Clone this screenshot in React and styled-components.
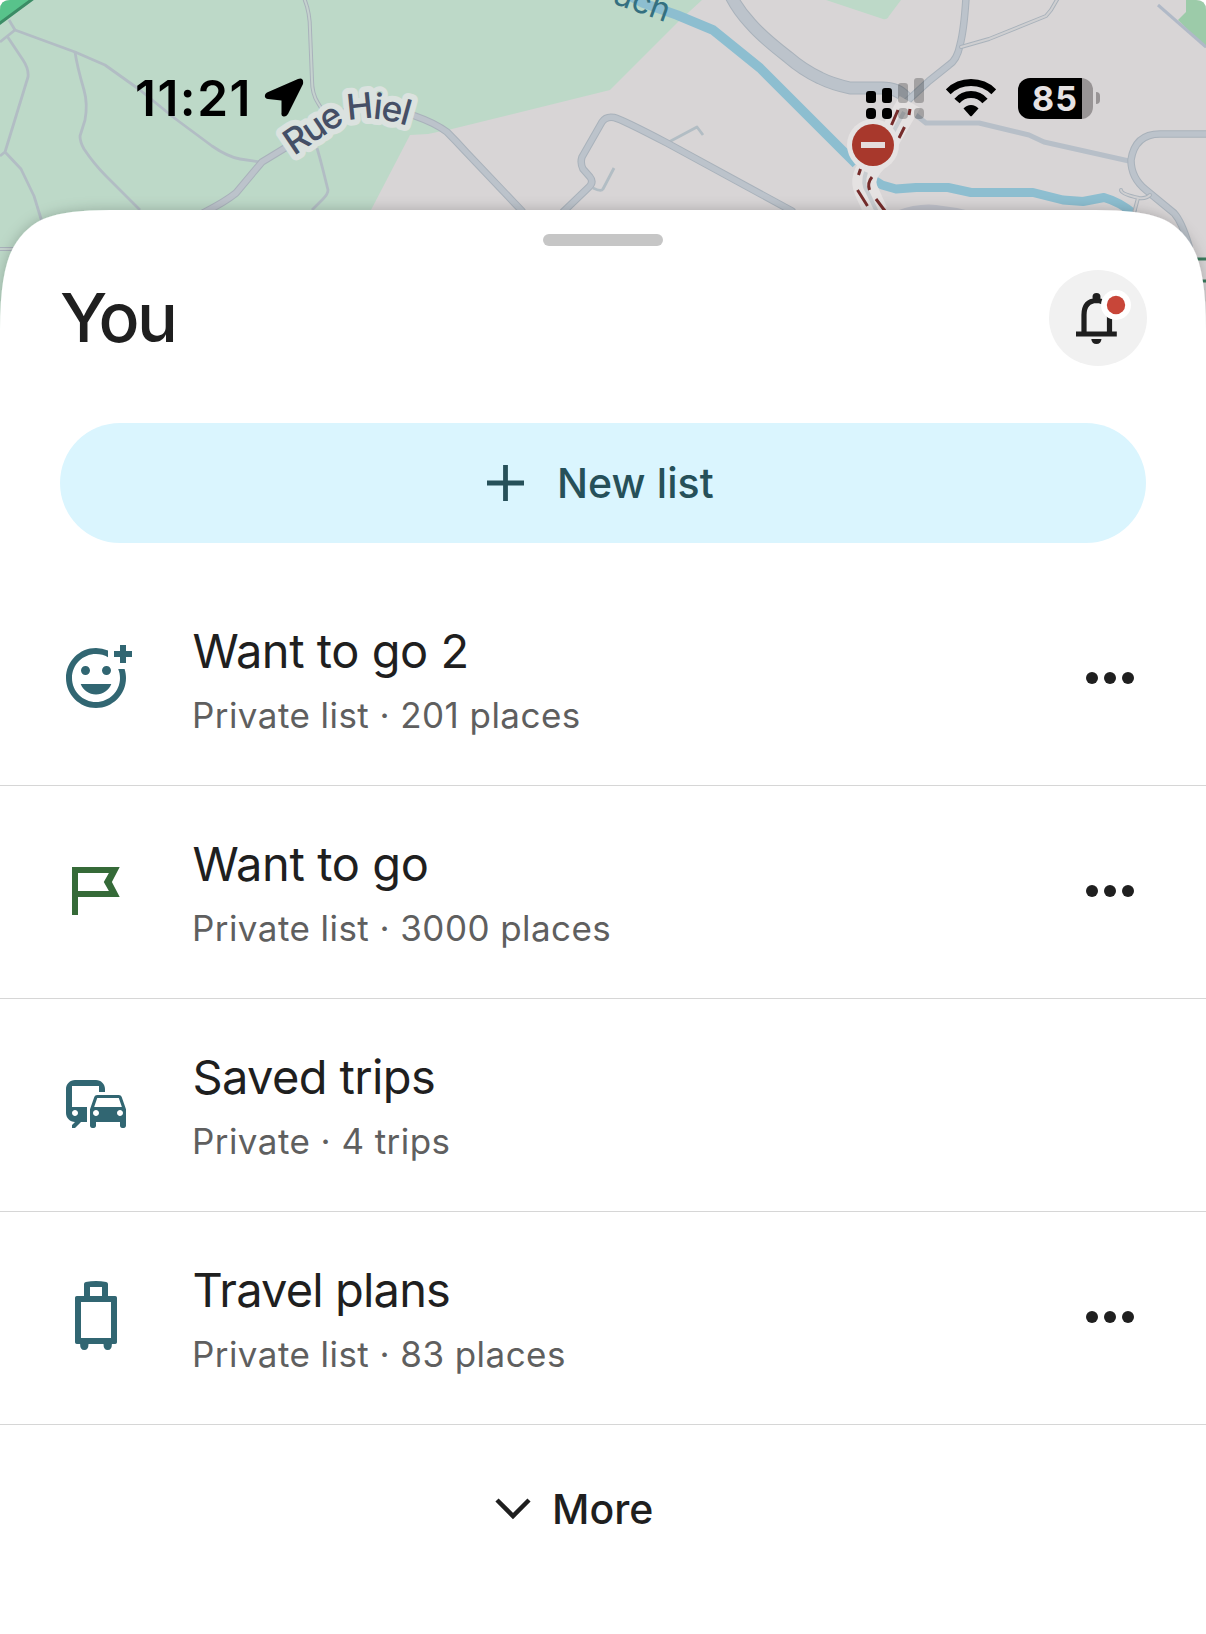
import React from "react";
import styled, { createGlobalStyle, css } from "styled-components";

const Global = createGlobalStyle`
  * { box-sizing: border-box; }
  body { margin: 0; background: #fff; font-family: Inter, "Liberation Sans", sans-serif; color: #1f1f1f; }
  button { font: inherit; color: inherit; border: 0; padding: 0; background: none; }
`;

const Screen = styled.main`
  width: 1206px;
  height: 1634px;
  overflow: hidden;
  position: relative;
  background: #fff;
`;

const MapArea = styled.svg`
  display: block;
  width: 1206px;
  height: 350px;
`;

const MapLabel = styled.text`
  font-family: Inter, sans-serif;
  font-size: ${(p) => p.$size}px;
  font-weight: ${(p) => p.$weight || 400};
  letter-spacing: ${(p) => p.$track || 0}px;
  word-spacing: -4px;
  fill: ${(p) => p.$fill};
  stroke: ${(p) => p.$halo || "none"};
  stroke-width: ${(p) => (p.$halo ? 12 : 0)}px;
  stroke-linejoin: round;
`;

const StatusBar = styled.header`
  position: absolute;
  top: 70px;
  left: 0;
  right: 0;
  height: 56px;
  padding: 0 106px 0 135px;
  display: flex;
  align-items: center;
  justify-content: space-between;
`;

const StatusGroup = styled.div`
  display: flex;
  align-items: center;
  gap: ${(p) => p.$gap}px;
`;

const Clock = styled.span`
  font-size: 49.5px;
  line-height: 56px;
  font-weight: 600;
  letter-spacing: 1.5px;
  color: #000;
`;

const Battery = styled.div`
  display: flex;
  align-items: center;
  gap: 3px;
`;

const BatteryBody = styled.div`
  width: 75px;
  height: 41px;
  padding-right: 1px;
  border-radius: 12px;
  background: linear-gradient(to right, #000 64px, #989495 64px);
  color: #e6e2e3;
  font-size: 34px;
  line-height: 41px;
  font-weight: 700;
  letter-spacing: 1px;
  text-align: center;
`;

const BatteryTip = styled.div`
  width: 4px;
  height: 12px;
  border-radius: 0 4px 4px 0;
  background: #989495;
`;

const Sheet = styled.section`
  position: relative;
  margin-top: -140px;
  display: flex;
  flex-direction: column;
`;

const Handle = styled.div`
  width: 120px;
  height: 12px;
  margin: 24px auto 0;
  border-radius: 6px;
  background: #c6c6c6;
`;

const TitleRow = styled.div`
  height: 96px;
  margin: 24px 59px 57px 60px;
  display: flex;
  align-items: center;
  justify-content: space-between;
`;

const Title = styled.h1`
  margin: 0;
  padding-bottom: 3px;
  font-size: 68px;
  line-height: 92px;
  font-weight: 500;
  letter-spacing: -2.8px;
`;

const BellButton = styled.button`
  width: 98px;
  height: 96px;
  border-radius: 50%;
  background: #f1f1f1;
`;

const actionText = css`
  font-size: 41px;
  line-height: 50px;
  font-weight: 500;
`;

const NewListButton = styled.button`
  ${actionText}
  height: 120px;
  margin: 0 60px;
  padding-left: 427px;
  border-radius: 60px;
  background: #daf5fe;
  color: #265059;
  display: flex;
  align-items: center;
  gap: 33px;
  letter-spacing: 0.1px;
`;

const List = styled.ul`
  list-style: none;
  margin: 30px 0 0;
  padding: 0;
`;

const ListRow = styled.li`
  height: 213px;
  padding: 0 72px 0 60px;
  border-bottom: 1px solid #d6d6d6;
  display: flex;
  align-items: flex-start;
`;

const RowIcon = styled.svg`
  width: 72px;
  height: 72px;
  margin-top: 69px;
  overflow: visible;
  fill: ${(p) => p.$color};
`;

const RowText = styled.div`
  flex: 1;
  margin: 46px 0 0 60px;
  display: flex;
  flex-direction: column;
  gap: 9px;
`;

const RowTitle = styled.span`
  font-size: 47px;
  line-height: 64px;
  padding-left: 0.5px;
  letter-spacing: ${(p) => p.$track}px;
`;

const RowMeta = styled.span`
  font-size: 35px;
  line-height: 46px;
  color: #5f5f5f;
  letter-spacing: 0.44px;
`;

const Dots = styled.button`
  width: 48px;
  margin-top: 99px;
  display: flex;
  justify-content: space-between;
  align-items: center;
`;

const Dot = styled.span`
  width: 12px;
  height: 12px;
  border-radius: 50%;
  background: #1f1f1f;
`;

const MoreButton = styled.button`
  ${actionText}
  margin-top: 59px;
  padding-left: 495px;
  display: flex;
  align-items: center;
  gap: 21px;
`;

const icons = {
  reaction: {
    color: "#316672",
    art: (
      <path d="M7 9.5C7 8.67 7.67 8 8.5 8s1.5.67 1.5 1.5S9.33 11 8.5 11 7 10.33 7 9.5zm5 8c2.33 0 4.31-1.46 5.11-3.5H6.89c.8 2.04 2.78 3.5 5.11 3.5zm3.5-6.5c.83 0 1.5-.67 1.5-1.5S16.33 8 15.5 8 14 8.67 14 9.5s.67 1.5 1.5 1.5zM22 1h-2v2h-2v2h2v2h2V5h2V3h-2V1zm-2 11c0 4.42-3.58 8-8 8s-8-3.58-8-8 3.58-8 8-8c1.46 0 2.82.4 4 1.08V2.84A9.929 9.929 0 0 0 11.99 2C6.47 2 2 6.48 2 12s4.47 10 9.99 10C17.52 22 22 17.52 22 12c0-1.05-.17-2.05-.47-3h-2.13c.38.93.6 1.94.6 3z" />
    ),
  },
  flag: {
    color: "#356a38",
    art: (
      <path
        fillRule="evenodd"
        d="M4 4h15.9l-2.6 5 2.6 5H6v6H4zM6 6v6h10.3l-1.7-3 1.7-3z"
      />
    ),
  },
  commute: {
    color: "#316672",
    art: (
      <path d="M12 4H5C3.34 4 2 5.34 2 7v8c0 1.66 1.34 3 3 3l-1 1v1h1l2-2.03L9 18v-5H4V5.98L13 6v2h2V7c0-1.66-1.34-3-3-3zM5 14c.55 0 1 .45 1 1s-.45 1-1 1-1-.45-1-1 .45-1 1-1zm15.57-4.34c-.14-.4-.52-.66-.97-.66h-7.19c-.46 0-.83.26-.98.66L10 13.77l.01 5.51c0 .38.31.72.69.72h.62c.38 0 .68-.38.68-.76V18h8v1.24c0 .38.31.76.69.76h.61c.38 0 .69-.34.69-.72l.01-1.37v-4.14l-1.43-4.11zm-8.16.34h7.19l1.03 3h-9.25l1.03-3zM12 16c-.55 0-1-.45-1-1s.45-1 1-1 1 .45 1 1-.45 1-1 1zm8 0c-.55 0-1-.45-1-1s.45-1 1-1 1 .45 1 1-.45 1-1 1z" />
    ),
  },
  luggage: {
    color: "#316672",
    art: (
      <path
        fillRule="evenodd"
        d="M8 5V1Q8 .4 8.6.3Q12-.3 15.4.3Q16 .4 16 1V5h2.4q.6 0 .6.6v14.8q0 .6-.6.6H17.3q0 2-1.4 2t-1.4-2h-5q0 2-1.4 2t-1.4-2H5.6q-.6 0-.6-.6V5.6q0-.6.6-.6zM10 2v3h4V2zM7 7v12h10V7z"
      />
    ),
  },
};

const lists = [
  { title: "Want to go 2", meta: "Private list · 201 places", icon: "reaction", menu: true, track: -0.48 },
  { title: "Want to go", meta: "Private list · 3000 places", icon: "flag", menu: true, track: -0.4 },
  { title: "Saved trips", meta: "Private · 4 trips", icon: "commute", menu: false, track: -0.62 },
  { title: "Travel plans", meta: "Private list · 83 places", icon: "luggage", menu: true, track: -0.85 },
];

const Road = ({ d, w = 7, fill = "#bcc3cb", edge = "#a9b2bb" }) => (
  <g fill="none" strokeLinejoin="round" strokeLinecap="round">
    <path d={d} stroke={edge} strokeWidth={w} />
    <path d={d} stroke={fill} strokeWidth={w - 2} />
  </g>
);

function MapView() {
  return (
    <MapArea viewBox="0 0 1206 350">
      <defs>
        <path id="hiel" d="M294 156L328 133Q344 121 358 119Q380 116 418 129" />
        <filter id="sheetShadow" x="-5%" y="-20%" width="110%" height="140%">
          <feDropShadow dx="0" dy="0" stdDeviation="7" floodColor="#000" floodOpacity="0.22" />
        </filter>
        <clipPath id="screenCorners">
          <path d="M0 10Q0 0 10 0H1196Q1206 0 1206 10V350H0z" />
        </clipPath>
      </defs>
      <g clipPath="url(#screenCorners)">
        <rect width="1206" height="350" fill="#d8d5d6" />
        <path d="M0 0H702L678 22L610 90L452 129L428 134L410 135L371 210L330 350H0z" fill="#bdd9c8" />
        <path d="M826 0L883 19Q887 20 889 16L901 0z" fill="#bdd9c8" />
        <path d="M1186 0V12L1178 20L1206 48V0z" fill="#9ccba9" />
        <path d="M-4 26L34 -2H-4z" fill="#58c38b" stroke="#3b8c65" strokeWidth="3" />
        <g fill="none" stroke="#b2bdc4" strokeWidth="2.8" strokeLinejoin="round">
          <path d="M0 42L15 30L75 52L105 65L140 90L173 117L212 146Q228 157 240 159L260 162" />
          <path d="M9 20L15 30" />
          <path d="M7 36L23 60Q29 69 28 77L5 152L0 156M5 152L21 169L34 196L42 222" />
          <path d="M75 52Q77 66 84 90Q88 104 85 120L80 136Q80 142 84 149Q94 164 106 176L140 210" />
          <path d="M317 148Q320 158 323 170L328 190Q328 194 323 199L312 210" />
          <path d="M667 143L697 127L703 135M593 188Q601 192 603 189L614 168" />
        </g>
        <Road d="M304 -2Q310 12 310 30L312 80Q312 94 318 103L326 116" w={4} fill="#c5d2ce" />
        <Road d="M0 249H18" w={4} fill="#c5d2ce" />
        <Road d="M203 213Q225 202 236 193L262 162L285 148L330 122L350 108L390 108L415 116Q435 123 447 132Q456 141 466 152L522 211" w={7.5} />
        <Road d="M563 212L589 187Q594 182 590 177L583 169Q580 163 582 157L602 122Q606 116 614 117.5Q621 119 667 143L792 211" w={7.5} />
        <g fill="none" stroke="#8dbed0" strokeLinejoin="round">
          <path strokeWidth="9.5" d="M630 -4L643 3L677 15L713 30L760 68L856 164" />
          <path strokeWidth="9" d="M874 180L882 185L896 189L916 187.5H948L971 192.5H1033L1063 200L1083 201.5L1104 197.5Q1120 202 1134 214" />
        </g>
        <Road d="M731 -4Q738 10 750 23Q762 37 788 57Q803 70 820 78Q832 84 850 88L882 88Q898 88 906 98" w={13} />
        <Road d="M966 -2Q964 30 960 45Q957 60 949 65L929 81L904 104" w={7.5} />
        <Road d="M961 47L989 39L1046 16L1051 10L1058 -2" w={4} fill="#cfcfd1" />
        <path d="M1158 5L1206 47" stroke="#b0b9c7" strokeWidth="3" />
        <path d="M912 112L926 123H979L1029 135L1044 142L1129 161" fill="none" stroke="#b7bfc8" strokeWidth="5" strokeLinejoin="round" />
        <Road d="M1210 134H1160Q1135 134 1131 160Q1131 178 1146 190L1174 213Q1182 222 1189 246" w={7.5} />
        <Road d="M1121 190Q1121 194 1139 198Q1146 199 1150 195M1138 198L1134 213" w={4} fill="#cfcfd1" />
        <path d="M896 211Q918 203 936 205Q954 207 970 211z" fill="#bfc1ca" />
        <path d="M910 102L876 160Q860 176 866 190L876 212" fill="none" stroke="#e5e2e2" strokeWidth="24" strokeLinejoin="round" />
        <path d="M904 112L890 138M866 172Q862 184 867 191L877 212" fill="none" stroke="#c9cdd1" strokeWidth="4" />
        <path
          fill="none"
          stroke="#762c2b"
          strokeWidth="3"
          d="M898 110L891.5 125M910 109L909 115M904.5 127L899 138M860.5 169L858.5 175M872 177Q867 183 869.5 190M857.5 190L867.5 206M876 199L885 211"
        />
        <circle cx="873" cy="145" r="26" fill="#e5e2e2" />
        <circle cx="873" cy="145" r="21" fill="#a8382c" />
        <rect x="861" y="142" width="24" height="6" fill="#e5dcdc" />
        <path d="M1196 259H1206M1200 281H1206" stroke="#3a7b5d" strokeWidth="3" />
        <MapLabel $size={35.5} $weight={500} $track={-1.6} $fill="#dbe2df" $halo="#dbe2df">
          <textPath href="#hiel">Rue Hiel</textPath>
        </MapLabel>
        <MapLabel $size={35.5} $weight={500} $track={-1.6} $fill="#454f66">
          <textPath href="#hiel">Rue Hiel</textPath>
        </MapLabel>
        <MapLabel $size={33} $fill="#347080" transform="translate(612 3) rotate(20)">
          ach
        </MapLabel>
      </g>
      <path
        filter="url(#sheetShadow)"
        fill="#fff"
        d="M0 370V330Q0 272 13 248C22 232 33 223 46 218Q66 210 110 210H1096Q1140 210 1160 218C1173 223 1184 232 1193 248Q1206 272 1206 330V370z"
      />
    </MapArea>
  );
}

const LocationArrow = () => (
  <svg width="40" height="40" viewBox="0 0 40 40">
    <path d="M34 1Q40-1 39 6L24 36Q22 39 19.500 38.500Q17 38 17.500 35V22.500L4 21Q1 20.500 .8 18Q.8 15.500 3 14.500z" />
  </svg>
);

const Signal = () => (
  <svg width="58" height="41" viewBox="0 0 58 41">
    <g>
      <rect y="13" width="10" height="12" rx="3" />
      <rect x="16" y="10" width="10" height="15" rx="3" />
      <rect y="30" width="10" height="11" rx="4" />
      <rect x="16" y="30" width="10" height="11" rx="4" />
    </g>
    <g opacity="0.24">
      <rect x="32" y="5" width="10" height="20" rx="3" />
      <rect x="48" y="0" width="10" height="25" rx="3" />
      <rect x="32" y="30" width="10" height="11" rx="4" />
      <rect x="48" y="30" width="10" height="11" rx="4" />
    </g>
  </svg>
);

const Wifi = () => (
  <svg width="50" height="38" viewBox="0 0 50 38">
    <g fill="none" stroke="#000" strokeWidth="6.800">
      <path d="M2.200 12.800Q11.500 3.500 25 3.500T47.800 12.800" />
      <path d="M11 22Q16.500 15.500 25 15.500T39 22" />
    </g>
    <path d="M17.500 29.500Q20.500 26 25 26T32.500 29.500L26 36.800Q25 37.800 24 36.800z" />
  </svg>
);

const Bell = () => (
  <svg width="98" height="96" viewBox="0 0 98 96">
    <g fill="none" stroke="#1f1f1f" strokeWidth="5.200">
      <path d="M35 64V45Q35 31 47.500 30.500Q60.500 31 60.500 45V64" />
      <path d="M27 64H67.800" />
    </g>
    <circle cx="47.500" cy="27" r="4" fill="#1f1f1f" />
    <path d="M42.300 69H52.500Q52 74 47.400 74T42.300 69z" fill="#1f1f1f" />
    <circle cx="67" cy="35" r="15" fill="#fff" />
    <circle cx="67" cy="35" r="9.200" fill="#c84639" />
  </svg>
);

export default function App() {
  return (
    <Screen>
      <Global />
      <MapView />
      <StatusBar>
        <StatusGroup $gap={12}>
          <Clock>11:21</Clock>
          <LocationArrow />
        </StatusGroup>
        <StatusGroup $gap={22}>
          <Signal />
          <Wifi />
          <Battery>
            <BatteryBody>85</BatteryBody>
            <BatteryTip />
          </Battery>
        </StatusGroup>
      </StatusBar>
      <Sheet>
        <Handle />
        <TitleRow>
          <Title>You</Title>
          <BellButton aria-label="Notifications">
            <Bell />
          </BellButton>
        </TitleRow>
        <NewListButton>
          <svg width="37" height="36" viewBox="0 0 37 36" stroke="#265059" strokeWidth="4.800">
            <path d="M18.500 0V36M0 18H37" />
          </svg>
          New list
        </NewListButton>
        <List>
          {lists.map((item) => (
            <ListRow key={item.title}>
              <RowIcon viewBox="0 0 24 24" $color={icons[item.icon].color}>
                {icons[item.icon].art}
              </RowIcon>
              <RowText>
                <RowTitle $track={item.track}>{item.title}</RowTitle>
                <RowMeta>{item.meta}</RowMeta>
              </RowText>
              {item.menu && (
                <Dots aria-label="Options">
                  <Dot />
                  <Dot />
                  <Dot />
                </Dots>
              )}
            </ListRow>
          ))}
        </List>
        <MoreButton>
          <svg width="36" height="22" viewBox="0 0 36 22" fill="none" stroke="#1f1f1f" strokeWidth="4.500">
            <path d="M2 2L18 18L34 2" />
          </svg>
          More
        </MoreButton>
      </Sheet>
    </Screen>
  );
}
